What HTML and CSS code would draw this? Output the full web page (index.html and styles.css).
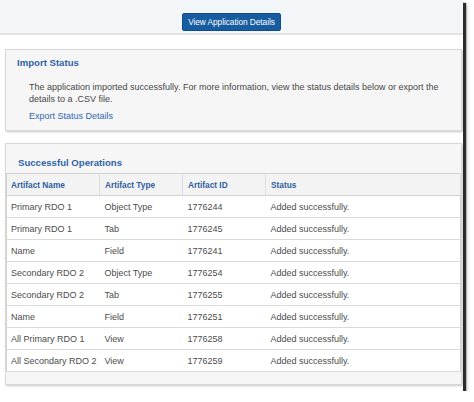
FILE: index.html
```html
<!DOCTYPE html>
<html>
<head>
<meta charset="utf-8">
<link rel="stylesheet" href="styles.css">
</head>
<body>
<div class="shot">
  <div class="topbar">
    <button class="btn-primary">View Application Details</button>
  </div>

  <section class="panel import">
    <h2 class="panel-title">Import Status</h2>
    <div class="panel-body">
      <p class="msg">The application imported successfully. For more information, view the status details below or export the details to a .CSV file.</p>
      <a class="link" href="#">Export Status Details</a>
    </div>
  </section>

  <section class="panel ops">
    <h2 class="panel-title ops-title">Successful Operations</h2>
    <table class="grid">
      <colgroup>
        <col class="c1"><col class="c2"><col class="c3"><col class="c4">
      </colgroup>
      <thead>
        <tr><th>Artifact Name</th><th>Artifact Type</th><th>Artifact ID</th><th>Status</th></tr>
      </thead>
      <tbody>
        <tr><td>Primary RDO 1</td><td>Object Type</td><td>1776244</td><td>Added successfully.</td></tr>
        <tr><td>Primary RDO 1</td><td>Tab</td><td>1776245</td><td>Added successfully.</td></tr>
        <tr><td>Name</td><td>Field</td><td>1776241</td><td>Added successfully.</td></tr>
        <tr><td>Secondary RDO 2</td><td>Object Type</td><td>1776254</td><td>Added successfully.</td></tr>
        <tr><td>Secondary RDO 2</td><td>Tab</td><td>1776255</td><td>Added successfully.</td></tr>
        <tr><td>Name</td><td>Field</td><td>1776251</td><td>Added successfully.</td></tr>
        <tr><td>All Primary RDO 1</td><td>View</td><td>1776258</td><td>Added successfully.</td></tr>
        <tr><td>All Secondary RDO 2</td><td>View</td><td>1776259</td><td>Added successfully.</td></tr>
      </tbody>
    </table>
    <div class="panel-foot"></div>
  </section>
</div>
</body>
</html>
```

FILE: styles.css
```css
* { box-sizing: border-box; }

html, body {
  margin: 0;
  padding: 0;
  background: #ffffff;
}

body {
  font-family: "Liberation Sans", Arial, sans-serif;
  color: #4a4a4a;
}

.shot {
  width: 463px;
  height: 391px;
  background: #ffffff;
  box-shadow: 3px 3px 1px rgba(25, 25, 25, 0.9), 4px 4px 3px rgba(0, 0, 0, 0.25);
  overflow: hidden;
}

.topbar {
  height: 35px;
  padding-top: 13px;
  background: #f3f6f8;
  border-bottom: 2px solid #e1e3e5;
  display: flex;
  justify-content: center;
  align-items: flex-start;
}

.btn-primary {
  height: 18px;
  width: 99px;
  padding: 0;
  border: 1px solid #0f4c8a;
  border-radius: 2px;
  background: #175ca0;
  color: #ffffff;
  font-family: "Liberation Sans", Arial, sans-serif;
  font-size: 8.3px;
  line-height: 16px;
  letter-spacing: -0.05px;
  text-align: center;
}

.panel {
  margin-left: 5px;
  width: 457px;
  background: #f6f6f6;
  border: 1px solid #d8d8d8;
  box-shadow: 1px 1px 2px rgba(0, 0, 0, 0.22);
}

.import {
  margin-top: 14px;
  height: 82px;
  padding: 7px 11px 0 11px;
}

.panel-title {
  margin: 0;
  font-size: 9.6px;
  line-height: 12px;
  font-weight: bold;
  color: #2f63a8;
}

.panel-body {
  padding-left: 12px;
  padding-right: 10px;
}

.msg {
  margin: 12px 0 0 0;
  font-size: 9px;
  line-height: 12.3px;
  color: #484848;
}

.link {
  display: block;
  margin-top: 4px;
  font-size: 9px;
  line-height: 12.3px;
  color: #2f68ae;
  text-decoration: none;
}

.ops {
  margin-top: 12px;
  height: 242px;
  padding-top: 13px;
  display: flex;
  flex-direction: column;
}

.ops-title {
  padding-left: 12px;
  margin-bottom: 4px;
}

.grid {
  width: 100%;
  border-collapse: collapse;
  table-layout: fixed;
  background: #ffffff;
  border: 1px solid #d2d2d2;
}

.c1 { width: 93px; }
.c2 { width: 83px; }
.c3 { width: 83px; }
.c4 { width: auto; }

.grid th,
.grid td {
  height: 22px;
  padding: 0 0 0 5px;
  text-align: left;
  white-space: nowrap;
  overflow: hidden;
  vertical-align: middle;
}

.grid th {
  background: #f3f3f3;
  color: #2f5f9f;
  font-size: 8.3px;
  font-weight: bold;
  border-bottom: 1px solid #d2d2d2;
  border-right: 1px solid #dedede;
}

.grid th:first-child,
.grid td:first-child {
  padding-left: 4px;
}

.grid td {
  font-size: 9px;
  color: #4c4c4c;
  border-bottom: 1px solid #dadada;
}

.panel-foot {
  flex: 1;
}
```
